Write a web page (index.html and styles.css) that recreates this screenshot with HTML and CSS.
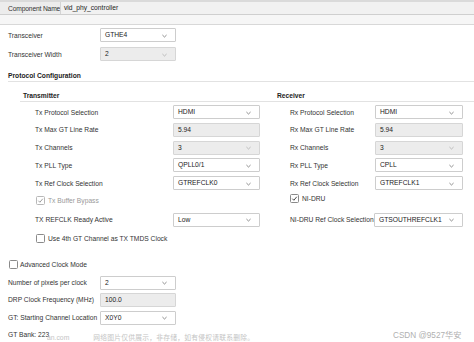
FILE: index.html
```html
<!DOCTYPE html>
<html lang="en">
<head>
  <meta charset="UTF-8">
  <title>Video PHY Controller</title>
  <link rel="stylesheet" href="styles.css">
</head>
<body>
  <div class="topbar">
    <div class="name-row">
      <span class="name-label">Component Name</span>
      <div class="name-input">vid_phy_controller</div>
    </div>
    <div class="subbar"></div>
  </div>

  <div class="main">
    <div class="row top-row">
      <span class="label w92">Transceiver</span>
      <div class="select w76">GTHE4<svg class="chev" viewBox="0 0 6 4"><polyline points="0.5,0.8 3,3.2 5.5,0.8"/></svg></div>
    </div>
    <div class="row top-row gap5">
      <span class="label w92">Transceiver Width</span>
      <div class="select w76 off">2<svg class="chev" viewBox="0 0 6 4"><polyline points="0.5,0.8 3,3.2 5.5,0.8"/></svg></div>
    </div>

    <div class="heading proto">Protocol Configuration</div>

    <div class="columns">
      <div class="col tx">
        <div class="heading sub">Transmitter</div>
        <div class="rows">
          <div class="row"><span class="label w138">Tx Protocol Selection</span><div class="select w87">HDMI<svg class="chev" viewBox="0 0 6 4"><polyline points="0.5,0.8 3,3.2 5.5,0.8"/></svg></div></div>
          <div class="row"><span class="label w138">Tx Max GT Line Rate</span><div class="select w87 off">5.94</div></div>
          <div class="row"><span class="label w138">Tx Channels</span><div class="select w87 off">3<svg class="chev" viewBox="0 0 6 4"><polyline points="0.5,0.8 3,3.2 5.5,0.8"/></svg></div></div>
          <div class="row"><span class="label w138">Tx PLL Type</span><div class="select w87">QPLL0/1<svg class="chev" viewBox="0 0 6 4"><polyline points="0.5,0.8 3,3.2 5.5,0.8"/></svg></div></div>
          <div class="row"><span class="label w138">Tx Ref Clock Selection</span><div class="select w87">GTREFCLK0<svg class="chev" viewBox="0 0 6 4"><polyline points="0.5,0.8 3,3.2 5.5,0.8"/></svg></div></div>
          <div class="row"><span class="check on dim"><svg viewBox="0 0 8 8"><polyline points="1.5,4.2 3.3,6 6.6,2"/></svg></span><span class="label dim">Tx Buffer Bypass</span></div>
          <div class="row gap6"><span class="label w138">TX REFCLK Ready Active</span><div class="select w87">Low<svg class="chev" viewBox="0 0 6 4"><polyline points="0.5,0.8 3,3.2 5.5,0.8"/></svg></div></div>
          <div class="row gap5"><span class="check"></span><span class="label">Use 4th GT Channel as TX TMDS Clock</span></div>
        </div>
      </div>
      <div class="col rx">
        <div class="heading sub">Receiver</div>
        <div class="rows">
          <div class="row"><span class="label w85">Rx Protocol Selection</span><div class="select w88">HDMI<svg class="chev" viewBox="0 0 6 4"><polyline points="0.5,0.8 3,3.2 5.5,0.8"/></svg></div></div>
          <div class="row"><span class="label w85">Rx Max GT Line Rate</span><div class="select w88 off">5.94</div></div>
          <div class="row"><span class="label w85">Rx Channels</span><div class="select w88 off">3<svg class="chev" viewBox="0 0 6 4"><polyline points="0.5,0.8 3,3.2 5.5,0.8"/></svg></div></div>
          <div class="row"><span class="label w85">Rx PLL Type</span><div class="select w88">CPLL<svg class="chev" viewBox="0 0 6 4"><polyline points="0.5,0.8 3,3.2 5.5,0.8"/></svg></div></div>
          <div class="row"><span class="label w85">Rx Ref Clock Selection</span><div class="select w88">GTREFCLK1<svg class="chev" viewBox="0 0 6 4"><polyline points="0.5,0.8 3,3.2 5.5,0.8"/></svg></div></div>
          <div class="row nudge"><span class="check on"><svg viewBox="0 0 8 8"><polyline points="1.5,4.2 3.3,6 6.6,2"/></svg></span><span class="label">NI-DRU</span></div>
          <div class="row gap6"><span class="label w84">NI-DRU Ref Clock Selection</span><div class="select w89">GTSOUTHREFCLK1<svg class="chev" viewBox="0 0 6 4"><polyline points="0.5,0.8 3,3.2 5.5,0.8"/></svg></div></div>
        </div>
      </div>
    </div>

    <div class="row adv"><span class="check"></span><span class="label">Advanced Clock Mode</span></div>
    <div class="row gap4"><span class="label w92">Number of pixels per clock</span><div class="select w76">2<svg class="chev" viewBox="0 0 6 4"><polyline points="0.5,0.8 3,3.2 5.5,0.8"/></svg></div></div>
    <div class="row gap3"><span class="label w92">DRP Clock Frequency (MHz)</span><div class="select w76 off">100.0</div></div>
    <div class="row gap4"><span class="label w92">GT: Starting Channel Location</span><div class="select w76">X0Y0<svg class="chev" viewBox="0 0 6 4"><polyline points="0.5,0.8 3,3.2 5.5,0.8"/></svg></div></div>
    <div class="row gap3"><span class="label">GT Bank: 223</span></div>
  </div>

  <div class="watermark"><span>an.com</span><span class="wm-cn">网络图片仅供展示，非存储，如有侵权请联系删除。</span></div>
  <div class="credit">CSDN @9527华安</div>
</body>
</html>
```

FILE: styles.css
```css
/* Vivado style IP customisation panel */
body {
  margin: 0;
  width: 474px;
  height: 342px;
  overflow: hidden;
  background: #fff;
  font-family: "Liberation Sans", Arial, "Noto Sans CJK SC", sans-serif;
  font-size: 6.7px;
  color: #333;
  position: relative;
}

.topbar {
  border-top: 2px solid #dadada;
}

.name-row {
  display: flex;
  align-items: center;
  height: 12px;
  background: #ececec;
  border-bottom: 1px solid #cfcfcf;
}

.name-label {
  flex-shrink: 0;
  width: 52px;
  padding-left: 8px;
  white-space: nowrap;
  letter-spacing: -0.15px;
  color: #333;
}

.name-input {
  flex: 1;
  height: 12px;
  line-height: 12px;
  padding-left: 3px;
  background: #f1f1f1;
  border-left: 1px solid #d4d4d4;
  color: #222;
}

.subbar {
  height: 9px;
  background: #f6f6f6;
  border-bottom: 1px solid #d8d8d8;
}

.main {
  padding-left: 8px;
}

.row {
  display: flex;
  align-items: center;
  height: 14px;
}

.top-row { margin-top: 3px; }
.gap3 { margin-top: 3px; }
.gap4 { margin-top: 4px; }
.gap5 { margin-top: 5px; }
.gap6 { margin-top: 6px; }

.label {
  white-space: nowrap;
}

.w92 { width: 92px; }
.w138 { width: 138px; }
.w85 { width: 85px; }
.w84 { width: 84px; }

.select {
  position: relative;
  box-sizing: border-box;
  height: 14px;
  line-height: 12px;
  padding-left: 4px;
  background: #fff;
  border: 1px solid #cdcdcd;
  border-radius: 1px;
  color: #222;
}

.select.off {
  background: #ececec;
  border-color: #d6d6d6;
}

.w76 { width: 76px; }
.w87 { width: 87px; }
.w88 { width: 88px; }
.w89 { width: 89px; }

.chev {
  position: absolute;
  right: 8px;
  top: 4.5px;
  width: 5px;
  height: 4px;
  fill: none;
  stroke: #666;
  stroke-width: 0.9;
}

.select.off .chev {
  stroke: #aaa;
}

.heading {
  font-weight: bold;
  color: #222;
  box-sizing: border-box;
  height: 11px;
  line-height: 10px;
  border-bottom: 1px solid #e2e2e2;
}

.proto {
  margin-top: 10px;
}

.columns {
  display: flex;
}

.col {
  padding-top: 9px;
}

.tx {
  margin-left: 12px;
  width: 253px;
}

.rx {
  flex: 1;
}

.sub {
  padding-left: 3px;
}

.tx .rows {
  padding-left: 15px;
}

.rx .sub {
  padding-left: 4px;
}

.rx .rows {
  padding-left: 17px;
}

.rows {
  display: flex;
  flex-direction: column;
  gap: 3.8px;
  padding-top: 3px;
}

.rows .gap5, .rows .gap6 {
  margin-top: 1px;
}

.nudge {
  margin-top: -2px;
  margin-bottom: 2px;
}

.check {
  box-sizing: border-box;
  width: 9px;
  height: 9px;
  margin-right: 3px;
  border: 1px solid #8a8a8a;
  border-radius: 1.5px;
  background: #fff;
}

.check svg {
  display: block;
  width: 7px;
  height: 7px;
  fill: none;
  stroke: #444;
  stroke-width: 1.1;
}

.check.dim {
  border-color: #b8b8b8;
}

.check.dim svg {
  stroke: #9a9a9a;
}

.label.dim {
  color: #999;
}

.tx .rows .check {
  margin-left: 1px;
}

.adv {
  margin-top: 12px;
  margin-left: 1px;
}

.adv .check {
  margin-right: 2px;
}

.watermark {
  position: absolute;
  left: 47px;
  top: 332px;
  font-size: 6.8px;
  color: #c4c4c4;
  white-space: nowrap;
}

.wm-cn {
  margin-left: 24px;
  letter-spacing: 0.2px;
}

.credit {
  position: absolute;
  left: 393px;
  top: 328px;
  font-size: 8.2px;
  color: #b0b0b0;
  white-space: nowrap;
}
```
